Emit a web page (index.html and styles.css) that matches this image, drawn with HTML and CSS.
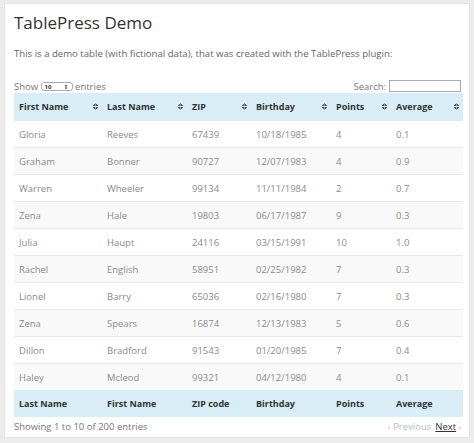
FILE: index.html
```html
<!DOCTYPE html>
<html>
<head>
<meta charset="utf-8">
<link rel="stylesheet" href="styles.css">
</head>
<body>
<div class="page">
  <h1 class="title">TablePress Demo</h1>
  <p class="intro">This is a demo table (with fictional data), that was created with the TablePress plugin:</p>
  <div class="controls">
    <div class="length">Show <span class="select">10 <span class="caret">&#8661;</span></span> entries</div>
    <div class="search">Search: <span class="input"></span></div>
  </div>
  <table class="tp">
    <colgroup>
      <col style="width:88px"><col style="width:85px"><col style="width:64px"><col style="width:80px"><col style="width:60px"><col style="width:72px">
    </colgroup>
    <thead>
      <tr>
        <th>First Name<i class="sort"></i></th>
        <th>Last Name<i class="sort"></i></th>
        <th>ZIP<i class="sort"></i></th>
        <th>Birthday<i class="sort"></i></th>
        <th>Points<i class="sort"></i></th>
        <th>Average<i class="sort"></i></th>
      </tr>
    </thead>
    <tbody>
      <tr><td>Gloria</td><td>Reeves</td><td>67439</td><td>10/18/1985</td><td>4</td><td>0.1</td></tr>
      <tr><td>Graham</td><td>Bonner</td><td>90727</td><td>12/07/1983</td><td>4</td><td>0.9</td></tr>
      <tr><td>Warren</td><td>Wheeler</td><td>99134</td><td>11/11/1984</td><td>2</td><td>0.7</td></tr>
      <tr><td>Zena</td><td>Hale</td><td>19803</td><td>06/17/1987</td><td>9</td><td>0.3</td></tr>
      <tr><td>Julia</td><td>Haupt</td><td>24116</td><td>03/15/1991</td><td>10</td><td>1.0</td></tr>
      <tr><td>Rachel</td><td>English</td><td>58951</td><td>02/25/1982</td><td>7</td><td>0.3</td></tr>
      <tr><td>Lionel</td><td>Barry</td><td>65036</td><td>02/16/1980</td><td>7</td><td>0.3</td></tr>
      <tr><td>Zena</td><td>Spears</td><td>16874</td><td>12/13/1983</td><td>5</td><td>0.6</td></tr>
      <tr><td>Dillon</td><td>Bradford</td><td>91543</td><td>01/20/1985</td><td>7</td><td>0.4</td></tr>
      <tr><td>Haley</td><td>Mcleod</td><td>99321</td><td>04/12/1980</td><td>4</td><td>0.1</td></tr>
    </tbody>
    <tfoot>
      <tr><th>Last Name</th><th>First Name</th><th>ZIP code</th><th>Birthday</th><th>Points</th><th>Average</th></tr>
    </tfoot>
  </table>
  <div class="bottom">
    <div class="info">Showing 1 to 10 of 200 entries</div>
    <div class="paging"><span class="prev">&#8249; Previous</span><span class="next">Next</span><span class="arrow">&#8250;</span></div>
  </div>
</div>
</body>
</html>
```

FILE: styles.css
```css
html, body { margin: 0; padding: 0; }
body {
  background: #ececec;
  font-family: "Open Sans", "DejaVu Sans", sans-serif;
  width: 474px;
  height: 443px;
  overflow: hidden;
}
.page {
  background: #fff;
  margin: 3px 4px 0 4px;
  height: 435px;
  padding: 0 8px 0 9px;
  box-sizing: border-box;
  border: 1px solid #e4e4e4;
}
.title {
  margin: 0;
  padding-top: 7px;
  font-size: 17px;
  font-weight: 400;
  color: #333;
  line-height: 24px;
}
.intro {
  margin: 11px 0 0;
  font-size: 9.6px;
  line-height: 16px;
  color: #666;
}
.controls {
  margin-top: 18px;
  display: flex;
  justify-content: space-between;
  align-items: center;
  font-size: 9.5px;
  color: #777;
  height: 12px;
}
.select {
  display: inline-flex;
  align-items: center;
  justify-content: space-between;
  width: 24px;
  height: 7px;
  border: 1px solid #aaa;
  border-radius: 3px;
  font-size: 6px;
  font-weight: 700;
  color: #333;
  padding: 0 3px;
  vertical-align: middle;
  box-sizing: content-box;
}
.caret { font-size: 6px; color: #555; }
.search { display: flex; align-items: center; gap: 3px; }
.input {
  display: inline-block;
  width: 70px;
  height: 10px;
  border: 1px solid #aaa;
  background: #fff;
}
.tp {
  width: 449px;
  border-collapse: collapse;
  table-layout: fixed;
  margin-top: 1px;
  font-size: 9.5px;
}
.tp th {
  background: #d9edf7;
  color: #333;
  font-weight: 700;
  font-size: 9px;
  text-align: left;
  height: 27px;
  padding: 0 5px;
  position: relative;
}
.tp td {
  color: #8a8a8a;
  height: 26px;
  padding: 0 5px;
  border-top: 1px solid #e8e8e8;
}
.tp tbody tr:nth-child(even) td { background: #f9f9f9; }
.sort {
  position: absolute;
  right: 4px;
  top: 10px;
  width: 5px;
  height: 7px;
  background:
    linear-gradient(to bottom right, transparent 50%, #555 50%) 0 0 / 2.5px 3px no-repeat,
    linear-gradient(to bottom left, transparent 50%, #555 50%) 2.5px 0 / 2.5px 3px no-repeat,
    linear-gradient(to top right, transparent 50%, #555 50%) 0 4px / 2.5px 3px no-repeat,
    linear-gradient(to top left, transparent 50%, #555 50%) 2.5px 4px / 2.5px 3px no-repeat;
}
.bottom {
  display: flex;
  justify-content: space-between;
  align-items: center;
  font-size: 9.5px;
  height: 18px;
}
.info { color: #777; }
.paging { display: flex; align-items: center; gap: 4px; }
.prev { color: #bbb; }
.next { color: #333; text-decoration: underline; }
.arrow { color: #bbb; margin-left: -2px; }
```
